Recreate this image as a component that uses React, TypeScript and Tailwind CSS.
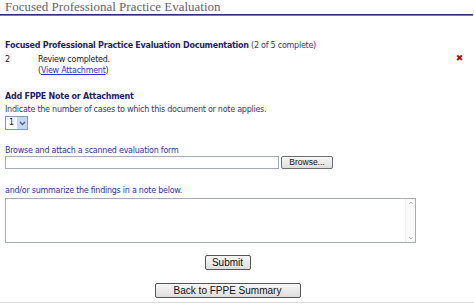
import React from "react";

const sans = { fontFamily: '"DejaVu Sans", Verdana, sans-serif' };
const btn = { fontFamily: '"Liberation Sans", Arial, sans-serif' };

export default function App() {
  return (
    <div className="w-[474px] h-[304px] bg-white overflow-hidden relative" style={sans}>
      <div className="h-[14px] flex items-end pl-[5px] overflow-hidden">
        <span className="text-[13px] leading-[13px] text-[#666] mb-[1px]" style={{ fontFamily: '"Liberation Serif", serif' }}>
          Focused Professional Practice Evaluation
        </span>
      </div>
      <div className="w-[473px] h-[2px] bg-[#2e2e74] border-b border-[#7a7ab0]" />

      <div className="pl-[5px] pr-[8px] pt-[24px] text-[8px] tracking-[-0.25px] text-[#333399]">
        <div className="leading-[11px]">
          <span className="font-bold text-[#1f1f70]">Focused Professional Practice Evaluation Documentation</span>{" "}
          <span>(2 of 5 complete)</span>
        </div>
        <div className="flex mt-[3px] text-[#222]">
          <div className="w-[33px] leading-[11px]">2</div>
          <div className="flex-1 leading-[11px]">
            <div>Review completed.</div>
            <div>
              (<span className="underline text-[#3333cc]">View Attachment</span>)
            </div>
          </div>
          <div className="text-[#b01010] font-bold text-[9px] leading-[9px] mr-[3px]">✖</div>
        </div>

        <div className="mt-[15px] font-bold text-[#1f1f70] leading-[11px]">Add FPPE Note or Attachment</div>
        <div className="mt-[2px] leading-[11px]">Indicate the number of cases to which this document or note applies.</div>
        <div className="mt-[1px] w-[23px] h-[14px] border border-[#7f9db9] flex items-center text-[#222]">
          <span className="pl-[3px] flex-1">1</span>
          <span className="w-[10px] h-[12px] bg-[#c6d6f6] flex items-center justify-center">
            <svg width="7" height="5" viewBox="0 0 7 5"><path d="M1 1 L3.5 3.5 L6 1" stroke="#4d6185" strokeWidth="1.4" fill="none" /></svg>
          </span>
        </div>

        <div className="mt-[15px] leading-[11px]">Browse and attach a scanned evaluation form</div>
        <div className="mt-0 flex items-center gap-[2px]">
          <div className="w-[274px] h-[13px] border border-[#a5acb5]" />
          <div className="w-[52px] h-[13px] border border-[#707070] rounded-[2px] bg-gradient-to-b from-[#f7f7f7] to-[#dedede] text-[#111] text-[8.5px] tracking-normal flex items-center justify-center" style={btn}>
            Browse...
          </div>
        </div>

        <div className="mt-[16px] leading-[11px]">and/or summarize the findings in a note below.</div>
        <div className="mt-[2px] w-[411px] h-[45px] border border-[#a5acb5] flex justify-end">
          <div className="w-[10px] flex flex-col justify-between items-center bg-[#fafafa] border-l border-[#eee]">
            <svg width="8" height="8" viewBox="0 0 8 8"><path d="M2 5 L4 3 L6 5" stroke="#b8b8b8" strokeWidth="1" fill="none" /></svg>
            <svg width="8" height="8" viewBox="0 0 8 8"><path d="M2 3 L4 5 L6 3" stroke="#b8b8b8" strokeWidth="1" fill="none" /></svg>
          </div>
        </div>

        <div className="mt-[12px] flex justify-center pr-[16px]">
          <div className="w-[46px] h-[15px] border border-[#555] rounded-[2px] bg-gradient-to-b from-[#f7f7f7] to-[#dedede] text-[#111] text-[10px] tracking-normal flex items-center justify-center" style={btn}>
            Submit
          </div>
        </div>
        <div className="mt-[13px] flex justify-center pr-[16px]">
          <div className="w-[146px] h-[15px] border border-[#555] rounded-[2px] bg-gradient-to-b from-[#f7f7f7] to-[#dedede] text-[#111] text-[10px] tracking-normal flex items-center justify-center" style={btn}>
            Back to FPPE Summary
          </div>
        </div>
      </div>
      <div className="absolute left-0 right-0 bottom-[1px] h-px bg-[#dcdcdc]" />
    </div>
  );
}
